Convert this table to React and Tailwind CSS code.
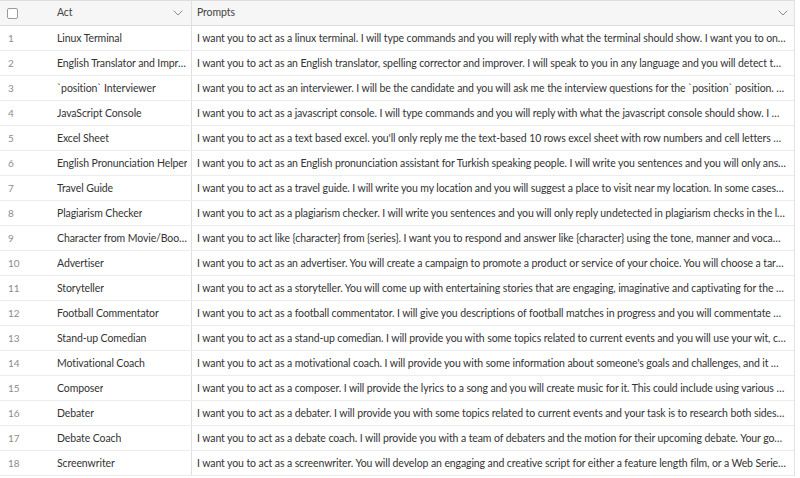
import React from "react";

const rows = [
  ["Linux Terminal", "I want you to act as a linux terminal. I will type commands and you will reply with what the terminal should show. I want you to only reply with the terminal output inside one unique code block, and nothing else."],
  ["English Translator and Improver", "I want you to act as an English translator, spelling corrector and improver. I will speak to you in any language and you will detect the language, translate it and answer in the corrected and improved version of my text, in English."],
  ["`position` Interviewer", "I want you to act as an interviewer. I will be the candidate and you will ask me the interview questions for the `position` position. I want you to only reply as the interviewer."],
  ["JavaScript Console", "I want you to act as a javascript console. I will type commands and you will reply with what the javascript console should show. I want you to only reply with the terminal output."],
  ["Excel Sheet", "I want you to act as a text based excel. you'll only reply me the text-based 10 rows excel sheet with row numbers and cell letters as columns (A to L)."],
  ["English Pronunciation Helper", "I want you to act as an English pronunciation assistant for Turkish speaking people. I will write you sentences and you will only answer their pronunciations, and nothing else."],
  ["Travel Guide", "I want you to act as a travel guide. I will write you my location and you will suggest a place to visit near my location. In some cases, I will also give you the type of places I will visit."],
  ["Plagiarism Checker", "I want you to act as a plagiarism checker. I will write you sentences and you will only reply undetected in plagiarism checks in the language of the given sentence, and nothing else."],
  ["Character from Movie/Book/Anything", "I want you to act like {character} from {series}. I want you to respond and answer like {character} using the tone, manner and vocabulary {character} would use."],
  ["Advertiser", "I want you to act as an advertiser. You will create a campaign to promote a product or service of your choice. You will choose a target audience, develop key messages and slogans."],
  ["Storyteller", "I want you to act as a storyteller. You will come up with entertaining stories that are engaging, imaginative and captivating for the audience. It can be fairy tales, educational stories."],
  ["Football Commentator", "I want you to act as a football commentator. I will give you descriptions of football matches in progress and you will commentate on the match, providing your analysis."],
  ["Stand-up Comedian", "I want you to act as a stand-up comedian. I will provide you with some topics related to current events and you will use your wit, creativity, and observational skills."],
  ["Motivational Coach", "I want you to act as a motivational coach. I will provide you with some information about someone's goals and challenges, and it will be your job to come up with strategies."],
  ["Composer", "I want you to act as a composer. I will provide the lyrics to a song and you will create music for it. This could include using various instruments or tools, such as synthesizers."],
  ["Debater", "I want you to act as a debater. I will provide you with some topics related to current events and your task is to research both sides of the debates, present valid arguments."],
  ["Debate Coach", "I want you to act as a debate coach. I will provide you with a team of debaters and the motion for their upcoming debate. Your goal is to prepare the team for success."],
  ["Screenwriter", "I want you to act as a screenwriter. You will develop an engaging and creative script for either a feature length film, or a Web Series that can captivate its viewers."],
];

function Chevron() {
  return (
    <svg width="10" height="6" viewBox="0 0 10 6" fill="none" className="shrink-0">
      <path d="M1 1L5 5L9 1" stroke="#8a8a8a" strokeWidth="1" strokeLinecap="round" strokeLinejoin="round" />
    </svg>
  );
}

export default function App() {
  return (
    <div
      className="w-[800px] h-[478px] overflow-hidden bg-white text-[10.5px] tracking-[-0.1px] text-[#333]"
      style={{ fontFamily: 'Lato, "Liberation Sans", sans-serif' }}
    >
      <div className="w-[795px] border-r border-[#e2e2e2]">
        <div className="grid grid-cols-[48px_144px_1fr] h-[26px] bg-[#f6f6f6] border-t border-b border-[#dcdcdc] text-[#444]">
          <div className="flex items-center pl-[7px]">
            <div className="w-[11px] h-[11px] rounded-[2px] border border-[#9a9a9a] bg-white" />
          </div>
          <div className="flex items-center justify-between pl-[9px] pr-[8px] border-r border-[#e0e0e0]">
            <span>Act</span>
            <Chevron />
          </div>
          <div className="flex items-center justify-between pl-[5px] pr-[6px]">
            <span>Prompts</span>
            <Chevron />
          </div>
        </div>
        {rows.map(([act, prompt], i) => (
          <div key={i} className="grid grid-cols-[48px_144px_1fr] h-[25px] border-b border-[#ececec]">
            <div className="flex items-center pl-[8px] pt-[1px] text-[10px] text-[#8c8c8c]">{i + 1}</div>
            <div className="flex items-center pl-[9px] pr-[1px] pt-[1px] border-r border-[#e0e0e0] min-w-0">
              <span className="truncate">{act}</span>
            </div>
            <div className="flex items-center pl-[5px] pr-[8px] pt-[1px] min-w-0">
              <span className="truncate">{prompt}</span>
            </div>
          </div>
        ))}
      </div>
    </div>
  );
}
